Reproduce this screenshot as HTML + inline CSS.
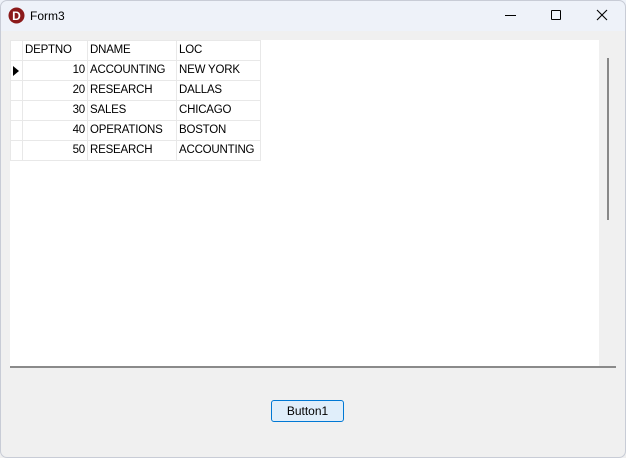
<!DOCTYPE html><html><head><style>
body{margin:0;width:626px;height:458px;position:relative;overflow:hidden;background:#f0f0f0;font-family:"Liberation Sans",sans-serif;font-size:12px;color:#000}
.title{position:absolute;left:0;top:0;width:626px;height:31px;background:#eef2f9}
.frame{position:absolute;left:0;top:0;width:624px;height:456px;border:1px solid #c8ccd6;border-radius:7px;pointer-events:none}
.grid{position:absolute;left:10px;top:40px;width:606px;height:326px;background:#fff;border-bottom:2px solid #8a8a8a}
.sb{position:absolute;left:589px;top:0;width:17px;height:326px;background:#f0f0f0}
.thumb{position:absolute;left:597px;top:18px;width:2px;height:162px;background:#888}
table{border-collapse:collapse;position:absolute;left:0;top:0;table-layout:fixed;width:250px}
td{height:19px;padding:0 2px;border:1px solid #e8e8e8;white-space:nowrap;line-height:19px;overflow:hidden;font-size:11.5px;letter-spacing:-0.2px}
.r{text-align:right}
</style></head><body>
<div class="title"></div>
<svg style="position:absolute;left:8px;top:7px" width="17" height="17"><circle cx="8.5" cy="8.5" r="8" fill="#8b1a1a"/><text x="8.5" y="13" text-anchor="middle" font-family="Liberation Sans" font-weight="bold" font-size="12" fill="#fff">D</text></svg>
<div style="position:absolute;left:30px;top:9px;font-size:12px">Form3</div>
<div style="position:absolute;left:505px;top:15px;width:11px;height:1px;background:#000"></div>
<div style="position:absolute;left:551px;top:10px;width:8px;height:8px;border:1px solid #000;border-radius:1px"></div>
<svg style="position:absolute;left:596px;top:9px" width="12" height="12"><path d="M1 1L11 11M11 1L1 11" stroke="#000" stroke-width="1.1"/></svg>
<div class="grid">
<table>
<colgroup><col style="width:12px"><col style="width:65px"><col style="width:89px"><col style="width:84px"></colgroup>
<tr><td></td><td>DEPTNO</td><td>DNAME</td><td>LOC</td></tr>
<tr><td style="position:relative"><svg style="position:absolute;left:2px;top:5px" width="6" height="10"><path d="M0 0L6 5L0 10Z" fill="#000"/></svg></td><td class="r">10</td><td>ACCOUNTING</td><td>NEW YORK</td></tr>
<tr><td></td><td class="r">20</td><td>RESEARCH</td><td>DALLAS</td></tr>
<tr><td></td><td class="r">30</td><td>SALES</td><td>CHICAGO</td></tr>
<tr><td></td><td class="r">40</td><td>OPERATIONS</td><td>BOSTON</td></tr>
<tr><td></td><td class="r">50</td><td>RESEARCH</td><td>ACCOUNTING</td></tr>
</table>
<div class="sb"></div><div class="thumb"></div>
</div>
<div style="position:absolute;left:271px;top:400px;width:71px;height:20px;border:1px solid #0078d4;border-radius:3px;background:#e0eefa;text-align:center;line-height:20px">Button1</div>
<div class="frame"></div>
</body></html>
